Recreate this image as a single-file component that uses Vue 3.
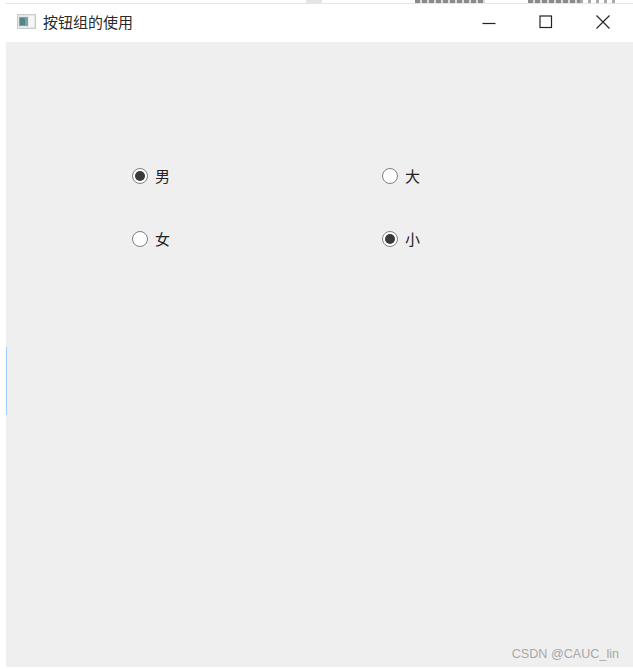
<script setup>
const radios = [
  { label: '男', checked: true },
  { label: '大', checked: false },
  { label: '女', checked: false },
  { label: '小', checked: true },
]
</script>

<template>
  <div class="page">
    <div class="strip">
      <span class="frag frag-a"></span>
      <span class="frag frag-b"></span>
      <span class="frag frag-c"></span>
      <span class="frag frag-d"></span>
    </div>
    <div class="window">
      <header class="titlebar">
        <svg class="app-icon" width="20" height="16" viewBox="0 0 20 16">
          <rect x="0" y="0" width="19" height="15" fill="#c9cccc" />
          <rect x="1" y="1" width="17" height="13" fill="#e6e8e8" />
          <rect x="2" y="3" width="9" height="9" fill="#7fa3a4" />
          <rect x="3" y="4" width="5" height="7" fill="#55838a" />
          <rect x="12" y="2" width="5" height="11" fill="#f4f5f5" />
        </svg>
        <span class="title">按钮组的使用</span>
        <div class="controls">
          <svg width="16" height="16" viewBox="0 0 16 16" class="ctl">
            <path d="M1.500 9.500H14.500" stroke="#222" stroke-width="1.200" fill="none" />
          </svg>
          <svg width="16" height="16" viewBox="0 0 16 16" class="ctl">
            <rect x="2" y="2" width="11.500" height="11.500" stroke="#222" stroke-width="1.200" fill="none" />
          </svg>
          <svg width="16" height="16" viewBox="0 0 16 16" class="ctl">
            <path d="M1.500 1.500L14.500 14.500M14.500 1.500L1.500 14.500" stroke="#222" stroke-width="1.100" fill="none" />
          </svg>
        </div>
      </header>
      <main class="content">
        <div class="grid">
          <label v-for="r in radios" :key="r.label" class="radio">
            <span class="circle"><span v-if="r.checked" class="dot"></span></span>
            <span class="text">{{ r.label }}</span>
          </label>
        </div>
      </main>
      <span class="accent"></span>
      <span class="mark">CSDN @CAUC_lin</span>
    </div>
  </div>
</template>

<style>
html, body { margin: 0; background: #fff; }
</style>

<style scoped>
.page {
  width: 633px;
  height: 670px;
  background: #fff;
  overflow: hidden;
  font-family: "Noto Sans CJK SC", "Liberation Sans", sans-serif;
}
.strip {
  height: 3px;
  display: flex;
  align-items: flex-start;
}
.frag {
  display: block;
  height: 3px;
}
.frag-a { width: 16px; margin-left: 306px; background: #e4e4e4; }
.frag-b { width: 70px; margin-left: 93px; background: repeating-linear-gradient(90deg, #8a8a8a 0 5px, #ddd 5px 7px); }
.frag-c { width: 52px; margin-left: 43px; background: repeating-linear-gradient(90deg, #8a8a8a 0 5px, #ddd 5px 7px); }
.frag-d { width: 40px; background: repeating-linear-gradient(90deg, #aaa 0 3px, #fff 3px 8px); }
.window {
  position: relative;
  margin-left: 6px;
  height: 664px;
  box-sizing: border-box;
  border-top: 1px solid #e6e6e6;
  display: flex;
  flex-direction: column;
}
.titlebar {
  height: 38px;
  flex: none;
  background: #fff;
  display: flex;
  align-items: center;
  padding-left: 11px;
  box-sizing: border-box;
}
.app-icon { flex: none; margin-top: -3px; }
.title {
  margin-left: 6px;
  margin-top: -3px;
  font-size: 15px;
  line-height: 20px;
  color: #2a2a2a;
}
.controls {
  margin-left: auto;
  display: flex;
  gap: 41px;
  padding-right: 22px;
  margin-top: -2px;
}
.ctl { display: block; }
.content {
  flex: 1;
  background: #efefef;
  padding: 119px 0 0 126px;
}
.grid {
  display: grid;
  grid-template-columns: 250px 250px;
  grid-auto-rows: 63px;
}
.radio {
  display: flex;
  align-items: flex-start;
  height: 30px;
}
.circle {
  width: 16px;
  height: 16px;
  box-sizing: border-box;
  margin-top: 7px;
  border: 1.500px solid #808080;
  border-radius: 50%;
  background: #fff;
  display: flex;
  align-items: center;
  justify-content: center;
  flex: none;
}
.dot {
  width: 10px;
  height: 10px;
  border-radius: 50%;
  background: #3a3a3a;
}
.text {
  margin-left: 7px;
  font-size: 15px;
  line-height: 30px;
  color: #222;
}
.accent {
  position: absolute;
  left: 0;
  top: 343px;
  width: 1px;
  height: 68px;
  background: #a4ccfa;
}
.mark {
  position: absolute;
  right: 14px;
  bottom: 5px;
  font-family: "Liberation Sans", sans-serif;
  font-size: 12.600px;
  line-height: 16px;
  color: #a8a8a8;
}
</style>
